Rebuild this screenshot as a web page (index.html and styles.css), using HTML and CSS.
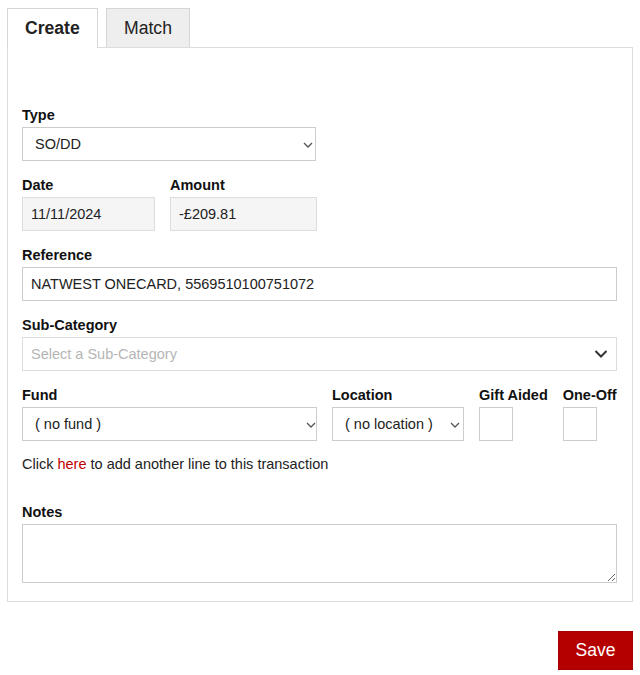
FILE: index.html
```html
<!DOCTYPE html>
<html>
<head>
<meta charset="utf-8">
<link rel="stylesheet" href="styles.css">
</head>
<body>
<div class="page">
  <div class="tabs">
    <div class="tab active">Create</div>
    <div class="tab">Match</div>
  </div>
  <div class="panel">
    <div class="group w-type">
      <label class="lbl">Type</label>
      <div class="selwrap">
        <select class="ctl sel"><option>SO/DD</option></select>
        <svg class="arrow" width="10" height="6" viewBox="0 0 10 6"><path d="M1 1 L5 5 L9 1" fill="none" stroke="#555" stroke-width="1.3"/></svg>
      </div>
    </div>
    <div class="row">
      <div class="group w-date">
        <label class="lbl">Date</label>
        <input class="ctl ro" value="11/11/2024" readonly>
      </div>
      <div class="group w-amount">
        <label class="lbl">Amount</label>
        <input class="ctl ro" value="-£209.81" readonly>
      </div>
    </div>
    <div class="group">
      <label class="lbl">Reference</label>
      <input class="ctl" value="NATWEST ONECARD, 5569510100751072">
    </div>
    <div class="group">
      <label class="lbl">Sub-Category</label>
      <div class="ctl combo">
        <span class="placeholder">Select a Sub-Category</span>
        <svg class="chev" width="14" height="10" viewBox="0 0 14 10"><path d="M1.5 2 L7 7.5 L12.5 2" fill="none" stroke="#333" stroke-width="2"/></svg>
      </div>
    </div>
    <div class="row">
      <div class="group w-fund">
        <label class="lbl">Fund</label>
        <div class="selwrap">
          <select class="ctl sel"><option>( no fund )</option></select>
          <svg class="arrow" width="10" height="6" viewBox="0 0 10 6"><path d="M1 1 L5 5 L9 1" fill="none" stroke="#555" stroke-width="1.3"/></svg>
        </div>
      </div>
      <div class="group w-loc">
        <label class="lbl">Location</label>
        <div class="selwrap">
          <select class="ctl sel"><option>( no location )</option></select>
          <svg class="arrow" width="10" height="6" viewBox="0 0 10 6"><path d="M1 1 L5 5 L9 1" fill="none" stroke="#555" stroke-width="1.3"/></svg>
        </div>
      </div>
      <div class="group">
        <label class="lbl">Gift Aided</label>
        <input type="checkbox" class="box">
      </div>
      <div class="group">
        <label class="lbl">One-Off</label>
        <input type="checkbox" class="box">
      </div>
    </div>
    <p class="hint">Click <a href="#" class="link">here</a> to add another line to this transaction</p>
    <div class="group">
      <label class="lbl">Notes</label>
      <textarea class="ctl notes"></textarea>
    </div>
  </div>
  <div class="actions">
    <button class="save">Save</button>
  </div>
</div>
</body>
</html>
```
FILE: styles.css
```css
* { box-sizing: border-box; }
body {
  margin: 0;
  font-family: "Liberation Sans", Arial, sans-serif;
  font-size: 14.5px;
  color: #222;
  background: #fff;
}
.page { padding: 8px 7px 0 7px; }
.tabs { display: flex; gap: 8px; }
.tab {
  height: 39px;
  width: 84px;
  padding: 0 17px;
  font-size: 17.6px;
  line-height: 38px;
  border: 1px solid #d6d6d6;
  border-bottom: none;
  background: #eee;
  color: #222;
}
.tab.active {
  background: #fff;
  font-weight: bold;
  position: relative;
  height: 40px;
  margin-bottom: -1px;
  z-index: 1;
  width: 91px;
}
.panel {
  border: 1px solid #dcdcdc;
  padding: 58px 15px 3px 14px;
  height: 555px;
}
.group { margin-bottom: 15px; }
.lbl {
  display: block;
  font-weight: bold;
  line-height: 18px;
  margin-bottom: 3px;
  color: #111;
}
.ctl {
  display: block;
  width: 100%;
  height: 34px;
  border: 1px solid #ccc;
  background: #fff;
  font-family: "Liberation Sans", Arial, sans-serif;
  font-size: 14.5px;
  color: #222;
  padding: 0 8px;
  border-radius: 0;
  outline: none;
}
.ro { background: #f5f5f5; border-color: #ddd; }
.selwrap { position: relative; }
.sel {
  appearance: none;
  -webkit-appearance: none;
  padding: 0 24px 0 12px;
}
.arrow {
  position: absolute;
  right: 4px;
  top: 15px;
  pointer-events: none;
}
.w-type .arrow { right: 3px; }
.w-fund .arrow { right: 1px; }
.w-type { width: 294px; }
.row { display: flex; gap: 15px; }
.w-date { width: 133px; }
.w-amount { width: 147px; }
.w-fund { width: 295px; }
.w-loc { width: 132px; }
.combo {
  display: flex;
  align-items: center;
  justify-content: space-between;
  padding: 0 8px 0 8px;
  border-color: #ddd;
}
.placeholder { color: #b5b5b5; }
.box {
  appearance: none;
  -webkit-appearance: none;
  display: block;
  margin: 0;
  width: 34px;
  height: 34px;
  border: 1px solid #ccc;
  background: #fff;
}
.hint { margin: 0 0 31px 0; line-height: 16px; color: #222; }
.link { color: #c00000; text-decoration: none; }
.notes { height: 59px; resize: vertical; padding: 6px 8px; }
.actions { display: flex; justify-content: flex-end; padding-top: 29px; }
.save {
  width: 75px;
  height: 39px;
  border: 1px solid #a80000;
  background: #b50000;
  color: #fff;
  font-family: "Liberation Sans", Arial, sans-serif;
  font-size: 17.5px;
  padding: 0;
  border-radius: 0;
}
```
